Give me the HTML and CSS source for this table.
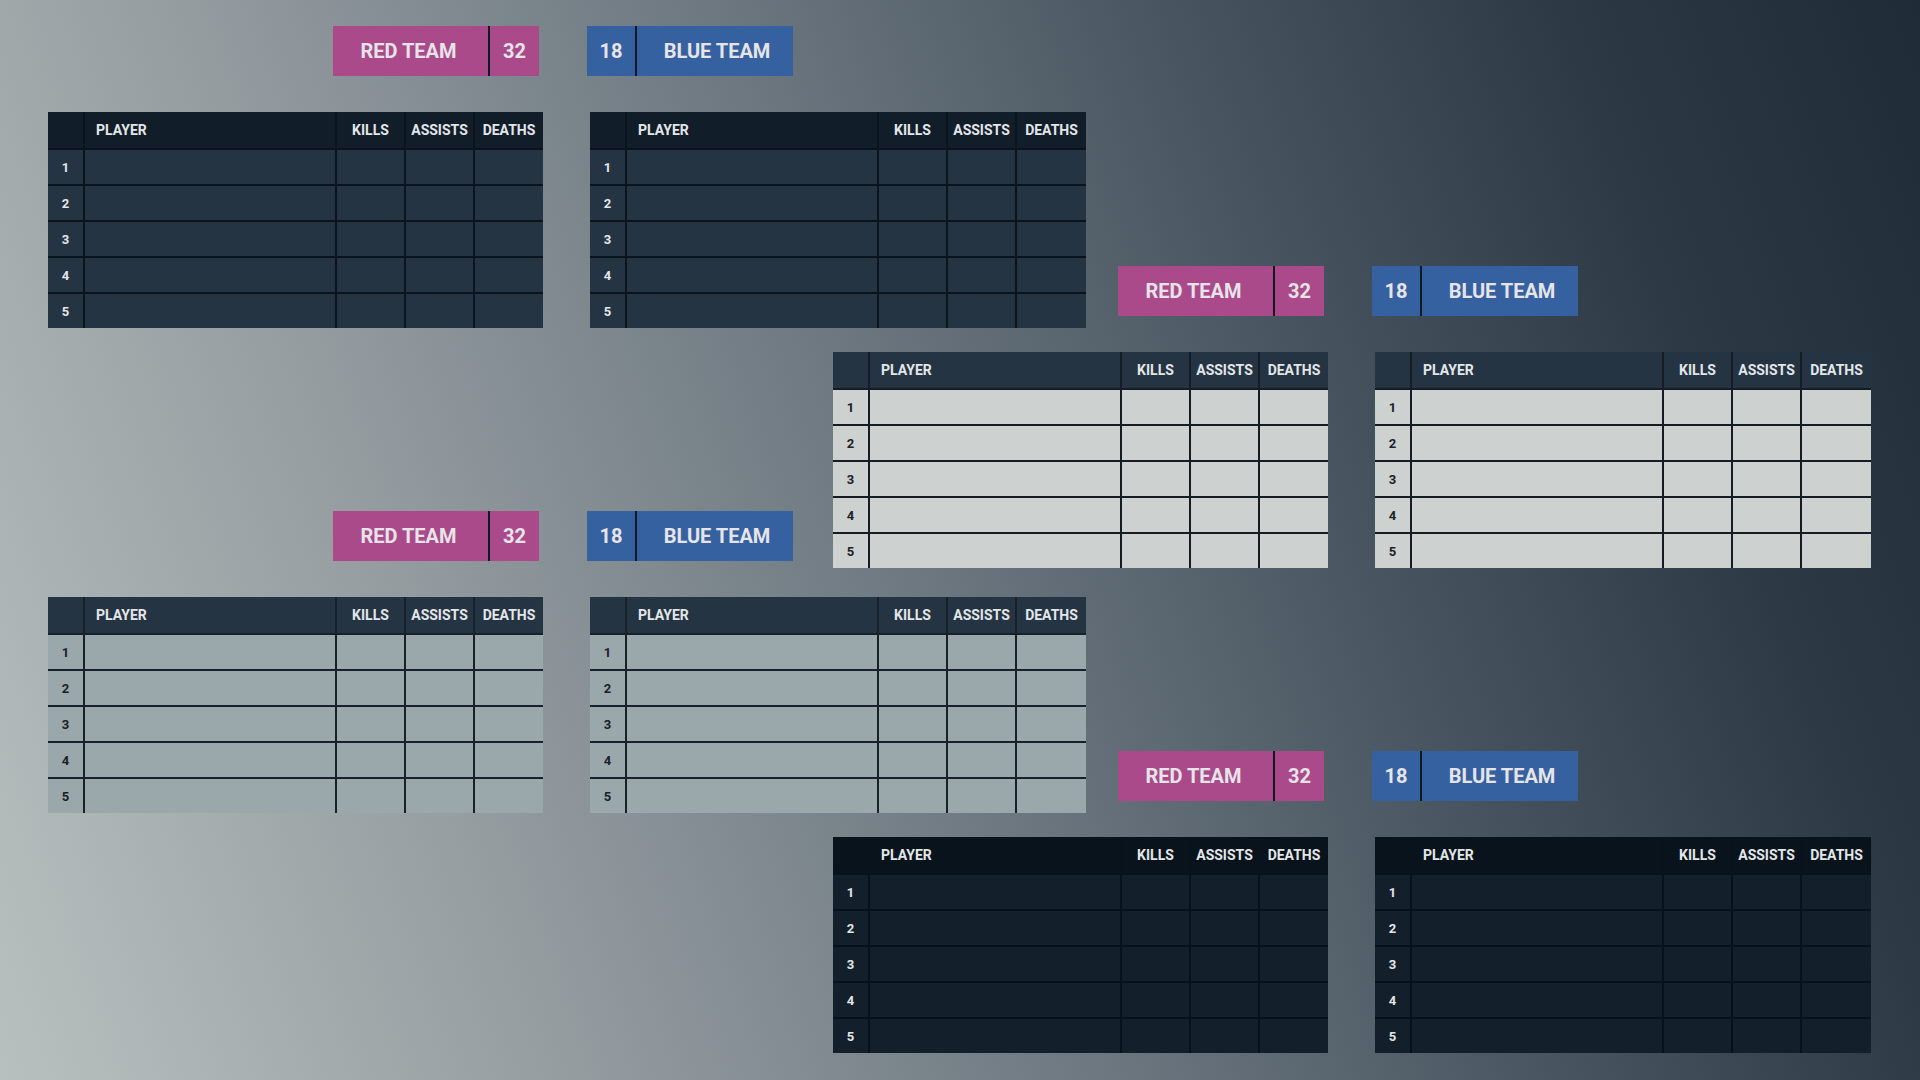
FILE: index.html
```html
<!DOCTYPE html>
<html lang="en">
<head>
<meta charset="utf-8">
<title>Scoreboards</title>
<link rel="stylesheet" href="styles.css">
</head>
<body>
<main class="board">

  <section class="match match--a theme-dark">
    <div class="scorebar">
      <div class="team team--red"><span class="team-name">RED TEAM</span><span class="team-score">32</span></div>
      <div class="team team--blue"><span class="team-score">18</span><span class="team-name">BLUE TEAM</span></div>
    </div>
    <div class="tables">
      <div class="stats">
        <div class="hd"></div><div class="hd hd-player">PLAYER</div><div class="hd">KILLS</div><div class="hd">ASSISTS</div><div class="hd">DEATHS</div>
        <div class="idx">1</div><div class="cell"></div><div class="cell"></div><div class="cell"></div><div class="cell"></div>
        <div class="idx">2</div><div class="cell"></div><div class="cell"></div><div class="cell"></div><div class="cell"></div>
        <div class="idx">3</div><div class="cell"></div><div class="cell"></div><div class="cell"></div><div class="cell"></div>
        <div class="idx">4</div><div class="cell"></div><div class="cell"></div><div class="cell"></div><div class="cell"></div>
        <div class="idx">5</div><div class="cell"></div><div class="cell"></div><div class="cell"></div><div class="cell"></div>
      </div>
      <div class="stats stats--b">
        <div class="hd"></div><div class="hd hd-player">PLAYER</div><div class="hd">KILLS</div><div class="hd">ASSISTS</div><div class="hd">DEATHS</div>
        <div class="idx">1</div><div class="cell"></div><div class="cell"></div><div class="cell"></div><div class="cell"></div>
        <div class="idx">2</div><div class="cell"></div><div class="cell"></div><div class="cell"></div><div class="cell"></div>
        <div class="idx">3</div><div class="cell"></div><div class="cell"></div><div class="cell"></div><div class="cell"></div>
        <div class="idx">4</div><div class="cell"></div><div class="cell"></div><div class="cell"></div><div class="cell"></div>
        <div class="idx">5</div><div class="cell"></div><div class="cell"></div><div class="cell"></div><div class="cell"></div>
      </div>
    </div>
  </section>

  <section class="match match--b theme-light">
    <div class="scorebar">
      <div class="team team--red"><span class="team-name">RED TEAM</span><span class="team-score">32</span></div>
      <div class="team team--blue"><span class="team-score">18</span><span class="team-name">BLUE TEAM</span></div>
    </div>
    <div class="tables">
      <div class="stats">
        <div class="hd"></div><div class="hd hd-player">PLAYER</div><div class="hd">KILLS</div><div class="hd">ASSISTS</div><div class="hd">DEATHS</div>
        <div class="idx">1</div><div class="cell"></div><div class="cell"></div><div class="cell"></div><div class="cell"></div>
        <div class="idx">2</div><div class="cell"></div><div class="cell"></div><div class="cell"></div><div class="cell"></div>
        <div class="idx">3</div><div class="cell"></div><div class="cell"></div><div class="cell"></div><div class="cell"></div>
        <div class="idx">4</div><div class="cell"></div><div class="cell"></div><div class="cell"></div><div class="cell"></div>
        <div class="idx">5</div><div class="cell"></div><div class="cell"></div><div class="cell"></div><div class="cell"></div>
      </div>
      <div class="stats stats--b">
        <div class="hd"></div><div class="hd hd-player">PLAYER</div><div class="hd">KILLS</div><div class="hd">ASSISTS</div><div class="hd">DEATHS</div>
        <div class="idx">1</div><div class="cell"></div><div class="cell"></div><div class="cell"></div><div class="cell"></div>
        <div class="idx">2</div><div class="cell"></div><div class="cell"></div><div class="cell"></div><div class="cell"></div>
        <div class="idx">3</div><div class="cell"></div><div class="cell"></div><div class="cell"></div><div class="cell"></div>
        <div class="idx">4</div><div class="cell"></div><div class="cell"></div><div class="cell"></div><div class="cell"></div>
        <div class="idx">5</div><div class="cell"></div><div class="cell"></div><div class="cell"></div><div class="cell"></div>
      </div>
    </div>
  </section>

  <section class="match match--c theme-mid">
    <div class="scorebar">
      <div class="team team--red"><span class="team-name">RED TEAM</span><span class="team-score">32</span></div>
      <div class="team team--blue"><span class="team-score">18</span><span class="team-name">BLUE TEAM</span></div>
    </div>
    <div class="tables">
      <div class="stats">
        <div class="hd"></div><div class="hd hd-player">PLAYER</div><div class="hd">KILLS</div><div class="hd">ASSISTS</div><div class="hd">DEATHS</div>
        <div class="idx">1</div><div class="cell"></div><div class="cell"></div><div class="cell"></div><div class="cell"></div>
        <div class="idx">2</div><div class="cell"></div><div class="cell"></div><div class="cell"></div><div class="cell"></div>
        <div class="idx">3</div><div class="cell"></div><div class="cell"></div><div class="cell"></div><div class="cell"></div>
        <div class="idx">4</div><div class="cell"></div><div class="cell"></div><div class="cell"></div><div class="cell"></div>
        <div class="idx">5</div><div class="cell"></div><div class="cell"></div><div class="cell"></div><div class="cell"></div>
      </div>
      <div class="stats stats--b">
        <div class="hd"></div><div class="hd hd-player">PLAYER</div><div class="hd">KILLS</div><div class="hd">ASSISTS</div><div class="hd">DEATHS</div>
        <div class="idx">1</div><div class="cell"></div><div class="cell"></div><div class="cell"></div><div class="cell"></div>
        <div class="idx">2</div><div class="cell"></div><div class="cell"></div><div class="cell"></div><div class="cell"></div>
        <div class="idx">3</div><div class="cell"></div><div class="cell"></div><div class="cell"></div><div class="cell"></div>
        <div class="idx">4</div><div class="cell"></div><div class="cell"></div><div class="cell"></div><div class="cell"></div>
        <div class="idx">5</div><div class="cell"></div><div class="cell"></div><div class="cell"></div><div class="cell"></div>
      </div>
    </div>
  </section>

  <section class="match match--d theme-night">
    <div class="scorebar">
      <div class="team team--red"><span class="team-name">RED TEAM</span><span class="team-score">32</span></div>
      <div class="team team--blue"><span class="team-score">18</span><span class="team-name">BLUE TEAM</span></div>
    </div>
    <div class="tables">
      <div class="stats">
        <div class="hd"></div><div class="hd hd-player">PLAYER</div><div class="hd">KILLS</div><div class="hd">ASSISTS</div><div class="hd">DEATHS</div>
        <div class="idx">1</div><div class="cell"></div><div class="cell"></div><div class="cell"></div><div class="cell"></div>
        <div class="idx">2</div><div class="cell"></div><div class="cell"></div><div class="cell"></div><div class="cell"></div>
        <div class="idx">3</div><div class="cell"></div><div class="cell"></div><div class="cell"></div><div class="cell"></div>
        <div class="idx">4</div><div class="cell"></div><div class="cell"></div><div class="cell"></div><div class="cell"></div>
        <div class="idx">5</div><div class="cell"></div><div class="cell"></div><div class="cell"></div><div class="cell"></div>
      </div>
      <div class="stats stats--b">
        <div class="hd"></div><div class="hd hd-player">PLAYER</div><div class="hd">KILLS</div><div class="hd">ASSISTS</div><div class="hd">DEATHS</div>
        <div class="idx">1</div><div class="cell"></div><div class="cell"></div><div class="cell"></div><div class="cell"></div>
        <div class="idx">2</div><div class="cell"></div><div class="cell"></div><div class="cell"></div><div class="cell"></div>
        <div class="idx">3</div><div class="cell"></div><div class="cell"></div><div class="cell"></div><div class="cell"></div>
        <div class="idx">4</div><div class="cell"></div><div class="cell"></div><div class="cell"></div><div class="cell"></div>
        <div class="idx">5</div><div class="cell"></div><div class="cell"></div><div class="cell"></div><div class="cell"></div>
      </div>
    </div>
  </section>

</main>
</body>
</html>
```

FILE: styles.css
```css
* { box-sizing: border-box; }

html, body {
  margin: 0;
  padding: 0;
  width: 1920px;
  height: 1080px;
  overflow: hidden;
}

body {
  font-family: Roboto, "Liberation Sans", sans-serif;
  background: linear-gradient(70deg, #b8c0bf 0%, #949ca0 25%, #6c7780 48%, #47535e 68%, #2c3945 85%, #1f2b37 100%);
}

.board {
  display: grid;
  grid-template-columns: 785px 1087px;
  grid-template-rows: 240px 245px 240px 240px;
  padding: 26px 0 0 48px;
}

.match {
  display: flex;
  flex-direction: column;
  align-items: flex-start;
  gap: 36px;
  width: 1038px;
  align-self: start;
}

.match--a { grid-column: 1; grid-row: 1; }
.match--b { grid-column: 2; grid-row: 2; }
.match--c { grid-column: 1; grid-row: 3; }
.match--d { grid-column: 2; grid-row: 4; }

/* score bar */
.scorebar {
  display: flex;
  gap: 48px;
  margin-left: 285px;
}

.team {
  display: flex;
  height: 50px;
  color: #e6e4e8;
  font-size: 20px;
  font-weight: 700;
}

.team span {
  display: flex;
  align-items: center;
  justify-content: center;
}

.team--red { background: #ab4a8a; }
.team--blue { background: #3661a0; }

.team--red .team-name { width: 155px; padding-right: 4px; }
.team--red .team-score { width: 51px; border-left: 2px solid #101923; }
.team--blue .team-score { width: 50px; border-right: 2px solid #101923; }
.team--blue .team-name { width: 156px; padding-left: 4px; }

/* tables */
.tables {
  display: flex;
  gap: 47px;
}

.stats {
  display: grid;
  grid-template-columns: 35px 250px 67px 67px 68px;
  grid-template-rows: 36px repeat(5, 34px);
  gap: 2px;
  width: 495px;
  background: var(--line);
}

.stats--b { width: 496px; grid-template-columns: 35px 250px 67px 67px 69px; }

.hd {
  background: var(--head);
  color: #e3e6e9;
  font-size: 14px;
  font-weight: 700;
  display: flex;
  align-items: center;
  justify-content: center;
}

.hd-player {
  justify-content: flex-start;
  padding-left: 11px;
}

.idx {
  background: var(--cell);
  color: var(--num);
  font-size: 13px;
  font-weight: 700;
  display: flex;
  align-items: center;
  justify-content: center;
}

.cell { background: var(--cell); }

.theme-dark  { --head: #111d29; --cell: #253443; --line: #0b141c; --num: #e3e6e9; }
.theme-light { --head: #253443; --cell: #cdd1d0; --line: #151c23; --num: #1b2127; }
.theme-mid   { --head: #253443; --cell: #9aa7ab; --line: #18212a; --num: #1b2127; }
.theme-night { --head: #08131b; --cell: #13202c; --line: #08121a; --num: #e3e6e9; }
```
